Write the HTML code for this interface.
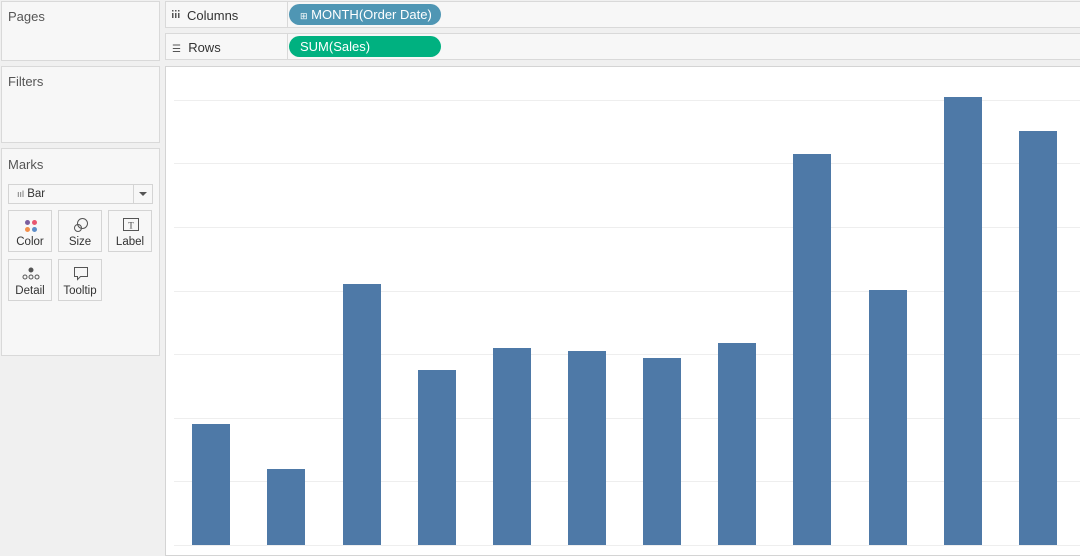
<!DOCTYPE html><html><head><style>
body{margin:0;width:1080px;height:552px;background:#f0f0f0;font-family:"Liberation Sans",sans-serif;position:relative;overflow:hidden;color:#333}
.box{position:absolute;background:#f7f7f7;border:1px solid #d9d9d9;box-sizing:border-box}
.t{position:absolute;font-size:13px;color:#555}
.card{position:absolute;width:44px;height:42px;border:1px solid #d4d4d4;background:#f7f7f7;box-sizing:border-box;font-size:11.5px;text-align:center;color:#333}
.card span{position:absolute;bottom:3px;left:0;right:0}
.pill{position:absolute;left:289px;width:152px;height:21px;border-radius:11px;color:#fff;font-size:13px;line-height:21px}
.g{position:absolute;left:174px;right:0;height:1px;background:#eeeeee}
.b{position:absolute;width:38px;background:#4e79a7;bottom:7px}
</style></head><body>
<div class="box" style="left:1px;top:1px;width:159px;height:60px"></div><div class="t" style="left:8px;top:9px">Pages</div>
<div class="box" style="left:1px;top:66px;width:159px;height:77px"></div><div class="t" style="left:8px;top:74px">Filters</div>
<div class="box" style="left:1px;top:148px;width:159px;height:208px"></div><div class="t" style="left:8px;top:157px">Marks</div>
<div style="position:absolute;left:8px;top:184px;width:145px;height:20px;border:1px solid #d4d4d4;background:#f7f7f7;box-sizing:border-box;font-size:11.5px;line-height:18px"><span style="margin-left:8px;color:#666;font-size:9px">ııl</span> Bar<div style="position:absolute;right:0;top:0;width:18px;height:18px;border-left:1px solid #d4d4d4"></div><div style="position:absolute;right:5px;top:7px;border:4px solid transparent;border-top:4px solid #555"></div></div>
<div class="card" style="left:8px;top:210px"><svg style="position:absolute;left:15px;top:8px" width="14" height="14"><circle cx="3.5" cy="3.5" r="2.5" fill="#7b5e9e"/><circle cx="10.5" cy="3.5" r="2.5" fill="#e8566f"/><circle cx="3.5" cy="10.5" r="2.5" fill="#f28e4a"/><circle cx="10.5" cy="10.5" r="2.5" fill="#5d8dc8"/></svg><span>Color</span></div>
<div class="card" style="left:58px;top:210px"><svg style="position:absolute;left:14px;top:6px" width="16" height="16" fill="none" stroke="#555"><circle cx="9.5" cy="6.5" r="5"/><circle cx="5" cy="11" r="3.5"/></svg><span>Size</span></div>
<div class="card" style="left:108px;top:210px"><svg style="position:absolute;left:14px;top:7px" width="16" height="14"><rect x="0.5" y="0.5" width="15" height="12" fill="none" stroke="#555"/><text x="8" y="10.5" font-size="9" text-anchor="middle" font-family="Liberation Serif" fill="#444">T</text></svg><span>Label</span></div>
<div class="card" style="left:8px;top:259px"><svg style="position:absolute;left:13px;top:7px" width="18" height="14" fill="none" stroke="#555"><circle cx="9" cy="3" r="2" fill="#555"/><circle cx="3" cy="10" r="2"/><circle cx="9" cy="10" r="2"/><circle cx="15" cy="10" r="2"/></svg><span>Detail</span></div>
<div class="card" style="left:58px;top:259px"><svg style="position:absolute;left:14px;top:6px" width="16" height="16" fill="none" stroke="#555"><path d="M1.5 1.5h13v9h-7l-3 3v-3h-3z"/></svg><span>Tooltip</span></div>
<div class="box" style="left:165px;top:1px;width:920px;height:27px"></div>
<div style="position:absolute;left:287px;top:1px;width:1px;height:27px;background:#d9d9d9"></div>
<svg style="position:absolute;left:172px;top:10px" width="8" height="8" fill="#555"><rect x="0" y="0" width="1.5" height="1.5"/><rect x="3" y="0" width="1.5" height="1.5"/><rect x="6" y="0" width="1.5" height="1.5"/><rect x="0" y="3" width="1.5" height="5"/><rect x="3" y="3" width="1.5" height="5"/><rect x="6" y="3" width="1.5" height="5"/></svg>
<div class="t" style="left:187px;top:8px;color:#333">Columns</div>
<div class="pill" style="top:4px;background:#4f96b4"><span style="font-size:9px;margin-left:11px">⊞</span> MONTH(Order Date)</div>
<div class="box" style="left:165px;top:33px;width:920px;height:27px"></div>
<div style="position:absolute;left:287px;top:33px;width:1px;height:27px;background:#d9d9d9"></div>
<div class="t" style="left:172px;top:40px;color:#333"><span style="font-size:10px;color:#555">☰</span>&nbsp; Rows</div>
<div class="pill" style="top:36px;background:#00b180"><span style="margin-left:11px">SUM(Sales)</span></div>
<div style="position:absolute;left:165px;top:66px;width:920px;height:490px;background:#fff;border:1px solid #d4d4d4;box-sizing:border-box"></div>
<div class="g" style="top:100px"></div><div class="g" style="top:163px"></div><div class="g" style="top:227px"></div><div class="g" style="top:291px"></div><div class="g" style="top:354px"></div><div class="g" style="top:418px"></div><div class="g" style="top:481px"></div><div class="g" style="top:545px"></div>
<div class="b" style="left:192px;top:424px"></div><div class="b" style="left:267px;top:469px"></div><div class="b" style="left:343px;top:284px"></div><div class="b" style="left:418px;top:370px"></div><div class="b" style="left:493px;top:348px"></div><div class="b" style="left:568px;top:351px"></div><div class="b" style="left:643px;top:358px"></div><div class="b" style="left:718px;top:343px"></div><div class="b" style="left:793px;top:154px"></div><div class="b" style="left:869px;top:290px"></div><div class="b" style="left:944px;top:97px"></div><div class="b" style="left:1019px;top:131px"></div>
</body></html>
